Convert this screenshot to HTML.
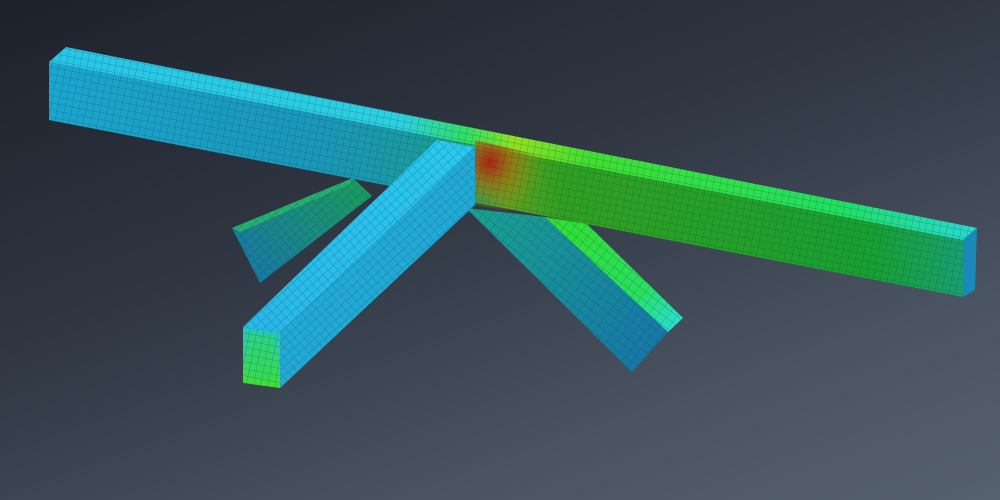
<!DOCTYPE html>
<html><head><style>
html,body{margin:0;padding:0;width:1000px;height:500px;overflow:hidden}
body{background:linear-gradient(160deg,#1d212b 0%,#2f3642 40%,#4a5361 75%,#566170 100%)}
svg{position:absolute;left:0;top:0}
</style></head><body>
<svg width="1000" height="500" viewBox="0 0 1000 500">
<defs>
<pattern id="m" width="7" height="7" patternUnits="userSpaceOnUse" patternTransform="rotate(11)">
<path d="M0 0H7M0 0V7" stroke="#1a3a48" stroke-opacity="0.5" stroke-width="0.7" fill="none"/>
</pattern>
<pattern id="m2" width="7" height="7" patternUnits="userSpaceOnUse" patternTransform="rotate(-42)">
<path d="M0 0H7M0 0V7" stroke="#1a3a48" stroke-opacity="0.5" stroke-width="0.7" fill="none"/>
</pattern>
<pattern id="m3" width="8" height="8" patternUnits="userSpaceOnUse" patternTransform="rotate(38)">
<path d="M0 0H8M0 0V8" stroke="#1a3a48" stroke-opacity="0.5" stroke-width="0.7" fill="none"/>
</pattern>
<linearGradient id="top" gradientUnits="userSpaceOnUse" x1="50" y1="0" x2="977" y2="0">
<stop offset="0" stop-color="#27c6e8"/><stop offset="0.38" stop-color="#2ad0e0"/>
<stop offset="0.45" stop-color="#30e060"/><stop offset="0.5" stop-color="#90e020"/>
<stop offset="0.58" stop-color="#40e030"/><stop offset="0.85" stop-color="#20e060"/>
<stop offset="1" stop-color="#28d8d0"/></linearGradient>
<linearGradient id="front" gradientUnits="userSpaceOnUse" x1="50" y1="0" x2="963" y2="0">
<stop offset="0" stop-color="#1aa6d0"/><stop offset="0.3" stop-color="#1a96b8"/>
<stop offset="0.4" stop-color="#1a9aa0"/><stop offset="0.47" stop-color="#20a060"/>
<stop offset="0.5" stop-color="#60a020"/><stop offset="0.56" stop-color="#30a020"/>
<stop offset="0.9" stop-color="#18a030"/><stop offset="1" stop-color="#18a070"/></linearGradient>
<radialGradient id="hot" cx="490" cy="162" r="55" gradientUnits="userSpaceOnUse">
<stop offset="0" stop-color="#b02010"/><stop offset="0.4" stop-color="#a07010" stop-opacity="0.8"/>
<stop offset="1" stop-color="#80a010" stop-opacity="0"/></radialGradient>
<linearGradient id="brace" gradientUnits="userSpaceOnUse" x1="450" y1="140" x2="260" y2="330">
<stop offset="0" stop-color="#2ac8ee"/><stop offset="1" stop-color="#28b8e8"/></linearGradient>
<linearGradient id="rb" gradientUnits="userSpaceOnUse" x1="480" y1="210" x2="640" y2="360">
<stop offset="0" stop-color="#18a090"/><stop offset="1" stop-color="#1678a8"/></linearGradient>
<linearGradient id="rg" gradientUnits="userSpaceOnUse" x1="560" y1="220" x2="670" y2="330">
<stop offset="0" stop-color="#30e030"/><stop offset="0.7" stop-color="#28e060"/><stop offset="1" stop-color="#28e0d0"/></linearGradient>
<linearGradient id="lb" gradientUnits="userSpaceOnUse" x1="350" y1="180" x2="250" y2="280">
<stop offset="0" stop-color="#1a9a60"/><stop offset="1" stop-color="#1878a8"/></linearGradient>
<linearGradient id="endg" gradientUnits="userSpaceOnUse" x1="262" y1="330" x2="262" y2="385">
<stop offset="0" stop-color="#20c8c0"/><stop offset="1" stop-color="#40e030"/></linearGradient>
</defs>
<!-- left short brace -->
<polygon points="232,228 353,178 372,196 260,283" fill="url(#lb)"/>
<polygon points="232,228 353,178 350,184 240,232" fill="#22b070"/>
<polygon points="232,228 353,178 372,196 260,283" fill="url(#m2)"/>
<!-- main beam -->
<polygon points="66,47 977,228 963,240 49,62" fill="url(#top)"/>
<polygon points="49,62 963,240 963,297 49,120" fill="url(#front)"/>
<polygon points="475,140 560,160 560,220 475,205" fill="url(#hot)"/>
<polygon points="963,240 977,228 975,290 963,297" fill="#1a88b8"/>
<polygon points="66,47 977,228 963,240 49,62" fill="url(#m)"/>
<polygon points="49,62 963,240 963,297 49,120" fill="url(#m)"/>
<!-- right brace -->
<polygon points="466,208 545,217 668,332 632,372" fill="url(#rb)"/>
<polygon points="545,217 587,224 683,318 668,332" fill="url(#rg)"/>
<polygon points="466,208 545,217 668,332 632,372" fill="url(#m3)"/>
<polygon points="545,217 587,224 683,318 668,332" fill="url(#m3)"/>
<!-- central brace -->
<polygon points="437,140 475,147 280,333 243,327" fill="url(#brace)"/>
<polygon points="475,147 475,205 280,388 280,333" fill="#22aad6"/>
<polygon points="243,327 280,333 280,388 243,383" fill="url(#endg)"/>
<polygon points="248,332 274,336 274,382 248,378" fill="#30d860" opacity="0.6"/>
<polygon points="437,140 475,147 280,333 243,327" fill="url(#m2)"/>
<polygon points="475,147 475,205 280,388 280,333" fill="url(#m2)"/>
<polygon points="243,327 280,333 280,388 243,383" fill="url(#m)"/>
</svg>
</body></html>
